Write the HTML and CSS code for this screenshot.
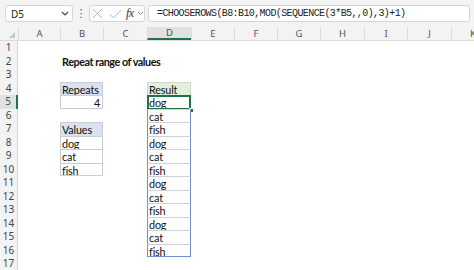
FILE: index.html
```html
<!DOCTYPE html>
<html>
<head>
<meta charset="utf-8">
<link rel="stylesheet" href="styles.css">
</head>
<body>
<div class="app">
  <div class="fbar">
    <div class="namebox">
      <span class="nb-text">D5</span>
      <svg class="chev" width="8" height="5" viewBox="0 0 8 5"><path d="M1 1 L4 4 L7 1" fill="none" stroke="#444" stroke-width="1.1"/></svg>
    </div>
    <div class="dots">⋮</div>
    <div class="fxbox">
      <svg class="ico-x" width="11" height="11" viewBox="0 0 11 11"><path d="M1 1 L10 10 M10 1 L1 10" stroke="#b4b4b4" stroke-width="1"/></svg>
      <svg class="ico-ok" width="13" height="10" viewBox="0 0 13 10"><path d="M1 5.5 L4.5 9 L12 1" fill="none" stroke="#b4b4b4" stroke-width="1"/></svg>
      <span class="fx">fx</span>
      <svg class="chev2" width="7" height="5" viewBox="0 0 7 5"><path d="M1 1 L3.5 3.5 L6 1" fill="none" stroke="#8a8a8a" stroke-width="1"/></svg>
    </div>
    <div class="formula">=CHOOSEROWS(B8:B10,MOD(SEQUENCE(3*B5,,0),3)+1)</div>
  </div>

  <div class="sheet">
    <div class="hrow">
      <div class="corner"><svg width="6" height="6" viewBox="0 0 6 6"><path d="M6 0 L6 6 L0 6 Z" fill="#c8c8c8"/></svg></div>
      <div class="ch wa">A</div>
      <div class="ch wb">B</div>
      <div class="ch wc">C</div>
      <div class="ch wd sel">D</div>
      <div class="ch we">E</div>
      <div class="ch wf">F</div>
      <div class="ch wg">G</div>
      <div class="ch wh">H</div>
      <div class="ch wi">I</div>
      <div class="ch wj">J</div>
      <div class="ch wk">K</div>
    </div>

    <div class="row"><div class="rh">1</div></div>
    <div class="row"><div class="rh">2</div><div class="c wa"></div><div class="c wb title">Repeat range of values</div></div>
    <div class="row"><div class="rh">3</div></div>
    <div class="row"><div class="rh">4</div><div class="c wa"></div><div class="c wb tb hb">Repeats</div><div class="c wc"></div><div class="c wd tb hg">Result</div></div>
    <div class="row"><div class="rh sel">5</div><div class="c wa"></div><div class="c wb tb last num">4</div><div class="c wc"></div><div class="c wd sp cur">dog<span class="selbox"></span><span class="handle"></span></div></div>
    <div class="row"><div class="rh">6</div><div class="c wa"></div><div class="c wb"></div><div class="c wc"></div><div class="c wd sp">cat</div></div>
    <div class="row"><div class="rh">7</div><div class="c wa"></div><div class="c wb tb hb">Values</div><div class="c wc"></div><div class="c wd sp">fish</div></div>
    <div class="row"><div class="rh">8</div><div class="c wa"></div><div class="c wb tb">dog</div><div class="c wc"></div><div class="c wd sp">dog</div></div>
    <div class="row"><div class="rh">9</div><div class="c wa"></div><div class="c wb tb">cat</div><div class="c wc"></div><div class="c wd sp">cat</div></div>
    <div class="row"><div class="rh">10</div><div class="c wa"></div><div class="c wb tb last">fish</div><div class="c wc"></div><div class="c wd sp">fish</div></div>
    <div class="row"><div class="rh">11</div><div class="c wa"></div><div class="c wb"></div><div class="c wc"></div><div class="c wd sp">dog</div></div>
    <div class="row"><div class="rh">12</div><div class="c wa"></div><div class="c wb"></div><div class="c wc"></div><div class="c wd sp">cat</div></div>
    <div class="row"><div class="rh">13</div><div class="c wa"></div><div class="c wb"></div><div class="c wc"></div><div class="c wd sp">fish</div></div>
    <div class="row"><div class="rh">14</div><div class="c wa"></div><div class="c wb"></div><div class="c wc"></div><div class="c wd sp">dog</div></div>
    <div class="row"><div class="rh">15</div><div class="c wa"></div><div class="c wb"></div><div class="c wc"></div><div class="c wd sp">cat</div></div>
    <div class="row"><div class="rh">16</div><div class="c wa"></div><div class="c wb"></div><div class="c wc"></div><div class="c wd sp splast">fish</div></div>
    <div class="row"><div class="rh">17</div></div>
  </div>
</div>
</body>
</html>
```

FILE: styles.css
```css
html, body {
  margin: 0;
  padding: 0;
  background: #ffffff;
  overflow: hidden;
}

.app {
  width: 474px;
  height: 270px;
  overflow: hidden;
  font-family: "Lato", "Noto Sans", sans-serif;
}

/* formula bar */
.fbar {
  height: 27px;
  box-sizing: border-box;
  background: #f3f3f3;
  display: flex;
  align-items: flex-start;
  padding: 5px 0 0 5px;
}

.namebox {
  box-sizing: border-box;
  width: 68px;
  height: 17px;
  background: #ffffff;
  border: 1px solid #d6d6d6;
  border-radius: 3px;
  display: flex;
  align-items: center;
  justify-content: space-between;
  padding: 0 3px 0 5px;
}

.nb-text {
  font-family: "Noto Sans", sans-serif;
  font-size: 10px;
  color: #222;
}

.dots {
  width: 16px;
  height: 17px;
  text-align: center;
  font-family: "DejaVu Sans", sans-serif;
  font-size: 11px;
  line-height: 17px;
  color: #555;
}

.fxbox {
  box-sizing: border-box;
  width: 56px;
  height: 17px;
  background: #ffffff;
  border: 1px solid #d6d6d6;
  border-radius: 3px;
  display: flex;
  align-items: center;
  padding-left: 2px;
}

.ico-x { margin-right: 6px; }
.ico-ok { margin-right: 4px; }

.fx {
  font-family: "Liberation Serif", serif;
  font-style: italic;
  font-size: 12px;
  color: #333;
  letter-spacing: -0.5px;
  margin-right: 3px;
}

.formula {
  box-sizing: border-box;
  margin-left: 3px;
  width: 322px;
  height: 17px;
  background: #ffffff;
  border: 1px solid #d6d6d6;
  border-radius: 3px;
  padding-left: 8px;
  font-family: "Liberation Mono", monospace;
  font-size: 10px;
  letter-spacing: -0.6px;
  line-height: 15px;
  color: #222;
  white-space: nowrap;
}

/* sheet */
.sheet {
  width: 474px;
}

.hrow {
  display: flex;
  height: 13px;
  background: #f3f3f3;
  border-bottom: 1px solid #dadada;
  box-sizing: content-box;
}

.corner {
  width: 18px;
  flex: none;
  box-sizing: border-box;
  display: flex;
  align-items: flex-end;
  justify-content: flex-end;
  padding: 0 3px 2px 0;
}

.ch {
  flex: none;
  box-sizing: border-box;
  border-left: 1px solid #dcdcdc;
  text-align: center;
  font-family: "Noto Sans", sans-serif;
  font-size: 9.5px;
  line-height: 13px;
  color: #555;
}

.ch.sel {
  background: #e1e1e1;
  border-bottom: 2px solid #217346;
  color: #1e6b41;
  line-height: 12px;
}

.wa { width: 42px; }
.wb { width: 43px; }
.wc { width: 44px; }
.wd { width: 44px; }
.we { width: 43px; }
.wf { width: 43px; }
.wg { width: 43px; }
.wh { width: 44px; }
.wi { width: 43px; }
.wj { width: 44px; }
.wk { width: 43px; }

.row {
  display: flex;
  height: 13.5px;
}

.rh {
  width: 18px;
  flex: none;
  box-sizing: border-box;
  background: #f3f3f3;
  border-right: 1px solid #d4d4d4;
  text-align: center;
  font-family: "Noto Sans", sans-serif;
  font-size: 10px;
  line-height: 13.5px;
  color: #444;
}

.rh.sel {
  background: #e1e1e1;
  border-right: 2px solid #217346;
  color: #1e6b41;
}

.c {
  flex: none;
  position: relative;
  box-sizing: border-box;
  padding: 0 2px;
  font-family: "Lato", sans-serif;
  font-size: 10.8px;
  letter-spacing: -0.15px;
  line-height: 13px;
  color: #111;
  white-space: nowrap;
}

.title {
  font-weight: bold;
  letter-spacing: -0.45px;
  overflow: visible;
}

.tb {
  border: 1px solid #c9ced6;
  border-bottom: none;
  padding-left: 1px;
}

.tb.last {
  border-bottom: 1px solid #c9ced6;
}

.hb { background: #dae2f1; }
.hg { background: #e2efda; border-color: #cfd8c8; }

.num { text-align: right; }

.sp {
  border-left: 1px solid #6f8fc9;
  border-right: 1px solid #6f8fc9;
  border-top: 1px solid #cdd3de;
  padding-left: 1px;
}

.sp.splast {
  border-bottom: 1px solid #6f8fc9;
}

.selbox {
  position: absolute;
  left: -1px;
  top: -1px;
  right: -1px;
  bottom: -1px;
  border: 2px solid #217346;
}

.handle {
  position: absolute;
  right: -4px;
  bottom: -4px;
  width: 5px;
  height: 5px;
  background: #217346;
  border: 1px solid #ffffff;
  box-sizing: border-box;
}
```
